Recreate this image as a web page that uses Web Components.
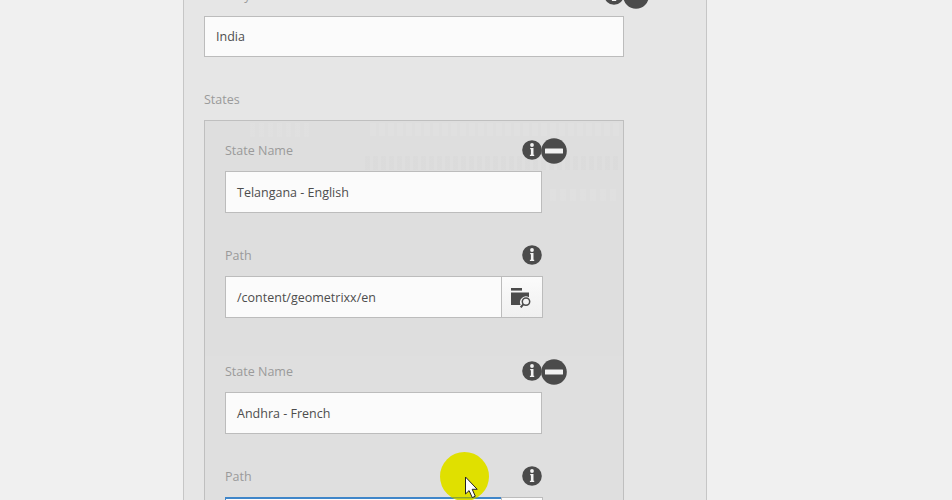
<!DOCTYPE html>
<html>
<head>
<meta charset="utf-8">
<title>Dialog</title>
<style>
html, body { margin: 0; height: 500px; overflow: hidden; background: #f0f0f0; }
body { font-family: "Open Sans", "Noto Sans", sans-serif; font-size: 12.5px; }
</style>
</head>
<body>
<form-page>
  <form-field label="Country" value="India" removable wide></form-field>
  <state-list label="States">
    <form-field label="State Name" value="Telangana - English" removable></form-field>
    <form-field label="Path" value="/content/geometrixx/en" browse></form-field>
    <form-field label="State Name" value="Andhra - French" removable class="next"></form-field>
    <form-field label="Path" value="" browse focused></form-field>
  </state-list>
</form-page>
<click-cursor></click-cursor>

<script>
class infoIcon extends HTMLElement {
    constructor() {
        super()
        this.attachShadow({ mode: "open" })
        this.shadowRoot.innerHTML = `
        <style>:host { display: block; width: 20px; height: 20px; } svg { display: block; }</style>
        <svg width="20" height="20" viewBox="0 0 20 20">
            <circle cx="10" cy="10" r="9.8" fill="#4b4b4b"/>
            <circle cx="10" cy="5" r="1.9" fill="#f2f2f2"/>
            <path d="M8.2 8h3.3v6.8h.7v1.3H7.9v-1.3h1V9.3h-.7z" fill="#f2f2f2"/>
        </svg>`
    }
}
customElements.define('info-icon', infoIcon)

class removeIcon extends HTMLElement {
    constructor() {
        super()
        this.attachShadow({ mode: "open" })
        this.shadowRoot.innerHTML = `
        <style>:host { display: block; width: 26px; height: 26px; } svg { display: block; }</style>
        <svg width="26" height="26" viewBox="0 0 26 26">
            <circle cx="13" cy="13" r="12.8" fill="#4b4b4b"/>
            <rect x="4" y="10.5" width="18" height="5" rx=".5" fill="#f2f2f2"/>
        </svg>`
    }
}
customElements.define('remove-icon', removeIcon)

class browseIcon extends HTMLElement {
    constructor() {
        super()
        this.attachShadow({ mode: "open" })
        this.shadowRoot.innerHTML = `
        <style>:host { display: block; width: 21px; height: 20px; } svg { display: block; }</style>
        <svg width="21" height="20" viewBox="0 0 21 20">
            <path d="M0 0h11v2.6H0z" fill="#4b4b4b"/>
            <path d="M0 4.6h18v4.6a6 6 0 0 0-8.4 7.8H0z" fill="#4b4b4b"/>
            <circle cx="15" cy="13.6" r="3.7" fill="none" stroke="#4b4b4b" stroke-width="1.5"/>
            <path d="M12.3 16.4l-2.6 3" stroke="#4b4b4b" stroke-width="2" fill="none"/>
        </svg>`
    }
}
customElements.define('browse-icon', browseIcon)

class formField extends HTMLElement {
    constructor() {
        super()
        this.attachShadow({ mode: "open" })
    }
    connectedCallback() {
        const browse = this.hasAttribute('browse')
        const focused = this.hasAttribute('focused')
        this.shadowRoot.innerHTML = `
        <style>
        :host { display: block; width: 317px; }
        :host([wide]) { width: 420px; }
        :host([wide]) .input { height: 41px; padding-bottom: 1px; }
        :host(.next) { margin-top: 11px; }
        .head { display: flex; align-items: center; height: 30px; margin-bottom: 6px; color: #9a9a9a; }
        .head span { flex: 1; }
        .remove { width: 0; margin-top: 1px; }
        remove-icon { margin-left: -1px; }
        .row { display: flex; }
        .row.browse { margin-right: -1px; }
        .input {
            box-sizing: border-box; height: 42px; padding: 0 11px;
            display: flex; align-items: center; flex: 1; min-width: 0;
            background: #fbfbfb; border: 1px solid #bcbcbc; color: #4d4d4d;
        }
        .focused { border-color: #3f86c9; border-top-width: 2px; }
        .btn {
            box-sizing: border-box; width: 42px; height: 42px; margin-left: -1px;
            display: flex; align-items: center; justify-content: center; padding: 1px 1px 0 0;
            background: linear-gradient(#fbfbfb, #f0f0f0); border: 1px solid #bcbcbc;
        }
        </style>
        <div class="head">
            <span>${this.getAttribute('label')}</span>
            <info-icon></info-icon>
            ${this.hasAttribute('removable') ? '<div class="remove"><remove-icon></remove-icon></div>' : ''}
        </div>
        <div class="row ${browse ? 'browse' : ''}">
            <div class="input ${focused ? 'focused' : ''}">${this.getAttribute('value')}</div>
            ${browse ? '<div class="btn"><browse-icon></browse-icon></div>' : ''}
        </div>`
    }
}
customElements.define('form-field', formField)

class stateList extends HTMLElement {
    constructor() {
        super()
        this.attachShadow({ mode: "open" })
    }
    connectedCallback() {
        this.shadowRoot.innerHTML = `
        <style>
        :host { display: block; margin-top: 32px; }
        .title { height: 21px; line-height: 22px; color: #9a9a9a; margin-bottom: 10px; }
        .box {
            box-sizing: border-box; width: 420px; height: 500px; padding: 14px 20px;
            display: flex; flex-direction: column; gap: 27px;
            border: 1px solid #bfbfbf;
            /* faint ghost of the page behind the dialog */
            background:
                repeating-linear-gradient(90deg, rgba(255,255,255,.07) 0 6px, transparent 6px 9px) 165px 2px / 250px 13px no-repeat,
                repeating-linear-gradient(90deg, rgba(255,255,255,.05) 0 5px, transparent 5px 9px) 45px 2px / 60px 14px no-repeat,
                repeating-linear-gradient(90deg, rgba(0,0,0,.012) 0 5px, transparent 5px 8px) 160px 35px / 255px 14px no-repeat,
                repeating-linear-gradient(90deg, rgba(255,255,255,.06) 0 6px, transparent 6px 10px) 345px 68px / 70px 12px no-repeat,
                linear-gradient(#dedede 0 235px, #dfdfdf 235px);
        }
        </style>
        <div class="title">${this.getAttribute('label')}</div>
        <div class="box"><slot></slot></div>`
    }
}
customElements.define('state-list', stateList)

class formPage extends HTMLElement {
    constructor() {
        super()
        this.attachShadow({ mode: "open" })
        this.shadowRoot.innerHTML = `
        <style>
        :host { display: block; height: 500px; overflow: hidden; }
        .panel {
            box-sizing: border-box; width: 524px; height: 800px; margin: -20px 0 0 183px;
            padding: 0 20px; background: #e6e6e6;
            border-left: 1px solid #c6c6c6; border-right: 1px solid #c6c6c6;
        }
        </style>
        <div class="panel"><slot></slot></div>`
    }
}
customElements.define('form-page', formPage)

class clickCursor extends HTMLElement {
    constructor() {
        super()
        this.attachShadow({ mode: "open" })
        this.shadowRoot.innerHTML = `
        <style>
        :host { position: absolute; left: 440px; top: 452px; width: 49px; height: 48px; overflow: hidden; }
        svg { display: block; }
        </style>
        <svg width="49" height="48" viewBox="0 0 49 48">
            <defs><clipPath id="dot"><circle cx="24.5" cy="24.5" r="24.5"/></clipPath></defs>
            <circle cx="24.5" cy="24.5" r="24.5" fill="#e0e000"/>
            <rect y="45" width="49" height="1.5" fill="#8da82a" clip-path="url(#dot)"/>
            <path d="M25.5 25v17l3.6-3.4 3.2 7 3-1.4-3.1-6.9h5z" fill="#fff" stroke="#222" stroke-width="1"/>
        </svg>`
    }
}
customElements.define('click-cursor', clickCursor)
</script>
</body>
</html>
